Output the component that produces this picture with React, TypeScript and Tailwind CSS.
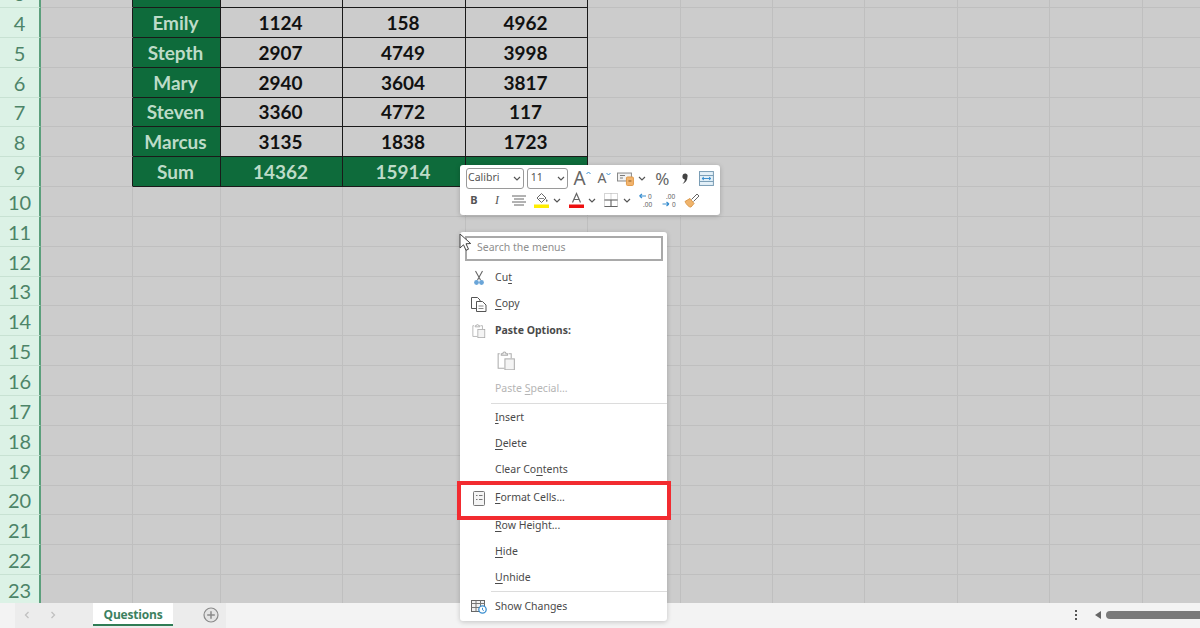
const gridCols = "grid grid-cols-[41px_92px_88px_122px_123px_122px_93px_92px_92px_93px_92px_93px_57px]";

const rows = [
  { n: 3, name: "Joanne", v: ["350", "450", "5023"], h: "h-[8px]" },
  { n: 4, name: "Emily", v: ["1124", "158", "4962"] },
  { n: 5, name: "Stepth", v: ["2907", "4749", "3998"] },
  { n: 6, name: "Mary", v: ["2940", "3604", "3817"] },
  { n: 7, name: "Steven", v: ["3360", "4772", "117"] },
  { n: 8, name: "Marcus", v: ["3135", "1838", "1723"] },
  { n: 9, name: "Sum", v: ["14362", "15914", ""], sum: true },
];
const empty = Array.from({ length: 14 }, (_, i) => i + 10);

function Txt({ children }: { children: React.ReactNode }) {
  return <span className="block h-[30px] shrink-0 pt-px leading-[30px] w-full text-center">{children}</span>;
}

function RowHeader({ n }: { n: number }) {
  return (
    <div className="flex items-end overflow-hidden bg-[#dcf2e6] border-r-2 border-r-[#5c9f7c] border-b border-b-[#c8e2d3] text-[#4d8468] text-[20px]">
      <Txt>{n}</Txt>
    </div>
  );
}

function EmptyCells({ count }: { count: number }) {
  return (
    <>
      {Array.from({ length: count }).map((_, i) => (
        <div key={i} className="border-r border-b border-[#bfbfbf] last:border-r-0" />
      ))}
    </>
  );
}

function Chevron({ className = "" }: { className?: string }) {
  return (
    <svg width="8" height="5" viewBox="0 0 8 5" className={className}>
      <path d="M1 1l3 3 3-3" fill="none" stroke="#555" strokeWidth="1.2" />
    </svg>
  );
}

function MenuItem({ icon, children, muted, bold, className = "" }: { icon?: React.ReactNode; children: React.ReactNode; muted?: boolean; bold?: boolean; className?: string }) {
  return (
    <div className={`flex items-center h-[26px] ${className}`}>
      <div className="w-[35px] flex justify-center items-center pl-[2px] shrink-0">{icon}</div>
      <span className={`text-[10.5px] underline-offset-2 ${muted ? "text-[#b5b5b5]" : "text-[#4a4a4a]"} ${bold ? "font-bold" : ""}`}>{children}</span>
    </div>
  );
}

function Clip({ size = 18, stroke = "#9a9a9a" }: { size?: number; stroke?: string }) {
  return (
    <svg width={size} height={size * 1.1} viewBox="0 0 18 20" fill="none" stroke={stroke} strokeWidth="1">
      <path d="M11 3.500h2.500V8M2.500 3.500H1v14h6" />
      <path d="M4 5V3.500h1.500a1.500 1.500 0 0 1 3 0H10V5z" fill="#f0f0f0" />
      <rect x="7.500" y="8.500" width="9" height="10.500" fill="#f4f4f4" />
    </svg>
  );
}

export default function App() {
  return (
    <div className="relative w-[1200px] h-[628px] overflow-hidden bg-[#cccccc] font-['Lato',sans-serif]">
      {/* Sheet */}
      <div className="h-[603px] overflow-hidden">
        {rows.map((r) => {
          const cell = "flex items-end overflow-hidden border-r border-b border-[#1a1a1a] font-bold text-[19px] pr-[2px]";
          const green = "bg-[#0e6b3b] text-[#bddbc8]";
          return (
            <div key={r.n} className={`${gridCols} ${r.h ?? "h-[29.85px]"}`}>
              <RowHeader n={r.n} />
              <div className="border-r border-b border-[#bfbfbf] !border-r-[#1a1a1a]" />
              <div className={`${cell} ${green}`}><Txt>{r.name}</Txt></div>
              {r.v.map((v, j) => (
                <div key={j} className={`${cell} ${r.sum ? green : "text-[#111111]"}`}><Txt>{v}</Txt></div>
              ))}
              <EmptyCells count={6} />
              <div className="border-b border-[#bfbfbf]" />
            </div>
          );
        })}
        {empty.map((n) => (
          <div key={n} className={`${gridCols} h-[29.85px]`}>
            <RowHeader n={n} />
            <EmptyCells count={12} />
          </div>
        ))}
      </div>

      {/* Sheet tabs bar */}
      <div className="h-[25px] flex bg-[#f3f3f3] relative">
        <div className="w-[226px] bg-[#ececec] flex items-start">
          <div className="w-[15px] h-full bg-[#f3f3f3]" />
          <div className="w-[78px] flex items-center h-[24px] pl-[9px] gap-[20px]">
            <svg width="6" height="8" viewBox="0 0 6 8"><path d="M4.500 1L1.500 4l3 3" fill="none" stroke="#c0c0c0" strokeWidth="1.300" /></svg>
            <svg width="6" height="8" viewBox="0 0 6 8"><path d="M1.500 1l3 3-3 3" fill="none" stroke="#c0c0c0" strokeWidth="1.300" /></svg>
          </div>
          <div className="w-[80px] h-[23px] bg-white border-b-2 border-[#2f7d55] flex items-center justify-center pt-[2px] text-[12px] font-bold text-[#3c8160] font-['Open_Sans',sans-serif] -tracking-[0.2px]">
            Questions
          </div>
          <div className="flex-1 flex justify-end items-center h-[24px] pr-[7px]">
            <svg width="16" height="16" viewBox="0 0 16 16" fill="none" stroke="#8a8a8a" strokeWidth="1.200">
              <circle cx="8" cy="8" r="7" fill="#e4e4e4" />
              <path d="M8 4.200v7.600M4.200 8h7.600" strokeWidth="1.500" />
            </svg>
          </div>
        </div>
        <div className="flex-1 flex items-center justify-end pb-[2px]">
          <div className="flex flex-col gap-[2px] mr-[17px]">
            <span className="w-[2px] h-[2px] bg-[#555]" />
            <span className="w-[2px] h-[2px] bg-[#555]" />
            <span className="w-[2px] h-[2px] bg-[#555]" />
          </div>
          <svg width="8" height="10" viewBox="0 0 8 10" className="mr-[4px]"><path d="M7 1v8L1 5z" fill="#666" /></svg>
          <div className="w-[94px] h-[8px] bg-[#7a7a7a] rounded-l-full" />
        </div>
      </div>

      {/* Mini toolbar */}
      <div className="absolute left-[460px] top-[165px] w-[260px] h-[50px] bg-white rounded-[3px] shadow-[0_1px_5px_rgba(0,0,0,0.22)] font-['Noto_Sans',sans-serif] px-[6px] pt-[2px]">
        <div className="flex items-center h-[22px]">
          <div className="w-[58px] h-[21px] border border-[#9a9a9a] rounded-[3px] flex items-center justify-between pl-[1px] pr-[2px] text-[10.5px] text-[#555]">Calibri<Chevron /></div>
          <div className="w-[42px] h-[21px] ml-[3px] border border-[#9a9a9a] rounded-[3px] flex items-center justify-between pl-[3px] pr-[2px] text-[10.5px] text-[#555]">11<Chevron /></div>
          <div className="ml-[5px] w-[17px] h-[20px] text-[19px] leading-[20px] text-[#666] flex">A<svg width="5" height="4" viewBox="0 0 5 4" className="mt-[3px] shrink-0"><path d="M.5 3l2-2 2 2" fill="none" stroke="#3b8fd0" /></svg></div>
          <div className="ml-[7px] w-[15px] h-[20px] text-[14px] leading-[20px] text-[#666] flex">A<svg width="5" height="4" viewBox="0 0 5 4" className="mt-[4px] shrink-0"><path d="M.5 1l2 2 2-2" fill="none" stroke="#3b8fd0" /></svg></div>
          <svg width="17" height="15" viewBox="0 0 17 15" className="ml-[5px]">
            <rect x=".5" y="2" width="14" height="8" fill="#f2f2f2" stroke="#888" />
            <path d="M3 4.500h5M3 7h3" stroke="#777" />
            <rect x="9.500" y="6" width="7" height="8.500" rx="1" fill="#f2b46e" stroke="#e19a4a" />
            <path d="M11.500 10h3" stroke="#8a5a20" />
          </svg>
          <Chevron className="ml-[4px]" />
          <span className="ml-[9px] w-[20px] text-[17px] leading-none text-[#666]">%</span>
          <svg width="8" height="13" viewBox="0 0 8 13" className="ml-[6px]">
            <path d="M1.500 4a2.600 2.600 0 1 1 5 1c0 3-2 6-5 7 1.500-1.500 2.300-3 2.400-4.500A3 3 0 0 1 1.500 4z" fill="#444" />
          </svg>
          <svg width="15" height="15" viewBox="0 0 15 15" className="ml-[10px]">
            <rect x=".5" y=".5" width="14" height="14" fill="#e3f0f8" stroke="#7a9db5" />
            <path d="M.5 4.500h14M.5 10.500h14" stroke="#7a9db5" />
            <path d="M3 7.500h9M3 7.500l2-1.500M3 7.500l2 1.500M12 7.500l-2-1.500M12 7.500l-2 1.500" stroke="#3b8fd0" fill="none" />
          </svg>
        </div>
        <div className="flex items-center h-[22px]">
          <span className="w-[12px] ml-[2px] text-center text-[11px] font-bold text-[#555]">B</span>
          <span className="w-[12px] ml-[11px] text-center text-[12px] italic text-[#555] font-['Liberation_Serif',serif]">I</span>
          <svg width="14" height="11" viewBox="0 0 14 11" className="ml-[9px]"><path d="M0 1h14M2 4h10M0 7h14M2 10h10" stroke="#666" /></svg>
          <svg width="15" height="16" viewBox="0 0 15 16" className="ml-[8px]">
            <path d="M7.500 1.500l4.500 4.500-4.500 4.500L3 6z" fill="#fff" stroke="#666" />
            <path d="M5 6.500h5" stroke="#888" />
            <path d="M12.500 7c1 1.300 1.500 2 .8 2.600-.6.4-1.400 0-1.300-.8z" fill="#666" />
            <rect x="0" y="12.500" width="15" height="3.500" fill="#ffee00" />
          </svg>
          <Chevron className="ml-[4px]" />
          <svg width="15" height="16" viewBox="0 0 15 16" className="ml-[8px]">
            <path d="M3.500 10.500l4-9 4 9M5 7.500h5" fill="none" stroke="#666" strokeWidth="1.200" />
            <rect x="0" y="12.500" width="15" height="3.500" fill="#ee1111" />
          </svg>
          <Chevron className="ml-[4px]" />
          <svg width="14" height="14" viewBox="0 0 14 14" className="ml-[8px]">
            <path d="M.5.5h13v13H.5zM7 .5v13M.5 7h13" fill="none" stroke="#aaa" strokeDasharray="1 1" />
            <path d="M.5 13.500h13M7 7v6.500M.5 7h13" fill="none" stroke="#666" />
          </svg>
          <Chevron className="ml-[5px]" />
          <svg width="16" height="15" viewBox="0 0 16 15" className="ml-[7px]">
            <path d="M8 3H1.500M1.500 3l2.500-2M1.500 3l2.500 2" fill="none" stroke="#3b8fd0" strokeWidth="1.200" />
            <text x="10" y="6" fontSize="6.500" fill="#666">0</text>
            <text x="5" y="13.500" fontSize="6.500" fill="#666">.00</text>
          </svg>
          <svg width="16" height="15" viewBox="0 0 16 15" className="ml-[8px]">
            <text x="4" y="6" fontSize="6.500" fill="#666">.00</text>
            <path d="M.5 11H7M7 11L4.500 9M7 11l-2.500 2" fill="none" stroke="#3b8fd0" strokeWidth="1.200" />
            <text x="10" y="13.500" fontSize="6.500" fill="#666">0</text>
          </svg>
          <svg width="16" height="15" viewBox="0 0 16 15" className="ml-[6px]">
            <path d="M1 8.500l5-3 4 5-3 3.500c-2 .5-5-3-6-5.500z" fill="#f0b46c" stroke="#dc9a4c" />
            <path d="M7.500 6.500L13 1l2 2-5.500 5.500" fill="#fff" stroke="#666" />
          </svg>
        </div>
      </div>

      {/* Context menu */}
      <div className="absolute left-[460px] top-[232px] w-[207px] h-[389px] bg-white rounded-[3px] shadow-[0_1px_5px_rgba(0,0,0,0.2)] font-['Noto_Sans',sans-serif]">
        <div className="mx-[5px] mt-[4px] h-[25px] w-[198px] border-2 border-[#a9a9a9] flex items-center pl-[10px] pb-[2px] text-[10.5px] text-[#8f8f8f]">Search the menus</div>
        <div className="h-[4px]" />
        <MenuItem icon={
          <svg width="12" height="16" viewBox="0 0 12 16" fill="none">
            <path d="M2.500 1L7.500 10M9.500 1L4.500 10" stroke="#666" strokeWidth="1.100" />
            <circle cx="3.500" cy="12.500" r="2.400" fill="#6aa5d8" />
            <circle cx="8.500" cy="12.500" r="2.400" fill="#6aa5d8" />
          </svg>
        }>Cu<u>t</u></MenuItem>
        <MenuItem icon={
          <svg width="16" height="15" viewBox="0 0 16 15" fill="none" stroke="#555">
            <path d="M5.500 11.500H.5V.5h6L9 3v1" />
            <path d="M5.500 4.500h6l3.500 3.500v6.500H5.500z" fill="#fff" />
            <path d="M7.500 9h5M7.500 11.500h5" stroke="#888" />
          </svg>
        }><u>C</u>opy</MenuItem>
        <MenuItem bold className="mt-px" icon={<Clip size={14} stroke="#a8a8a8" />}>Paste Options:</MenuItem>
        <div className="h-[32px] pl-[37px] flex items-center">
          <Clip size={19} stroke="#adadad" />
        </div>
        <MenuItem muted>Paste <u>S</u>pecial...</MenuItem>
        <div className="ml-[31px] h-px bg-[#dcdcdc] mt-px mb-[1px]" />
        <MenuItem><u>I</u>nsert</MenuItem>
        <MenuItem><u>D</u>elete</MenuItem>
        <MenuItem>Clear Co<u>n</u>tents</MenuItem>
        <MenuItem className="mt-[2px] mb-[2px]" icon={
          <svg width="12" height="15" viewBox="0 0 12 15" fill="none">
            <rect x=".5" y=".5" width="11" height="14" rx="1" fill="#f4f4f4" stroke="#777" />
            <path d="M3 4.500h1.500M3 8.500h1.500M6 4.500h3.500M6 8.500h3.500" stroke="#777" />
          </svg>
        }><u>F</u>ormat Cells...</MenuItem>
        <MenuItem><u>R</u>ow Height...</MenuItem>
        <MenuItem><u>H</u>ide</MenuItem>
        <MenuItem><u>U</u>nhide</MenuItem>
        <div className="ml-[31px] h-px bg-[#dcdcdc] mb-[2px]" />
        <MenuItem icon={
          <svg width="16" height="14" viewBox="0 0 16 14" fill="none">
            <rect x=".5" y=".5" width="13" height="11" fill="#f2f2f2" stroke="#666" />
            <path d="M.5 3.500h13M.5 7.500h13M5 .5v11M9.500 .5v11" stroke="#777" />
            <circle cx="11.500" cy="9.500" r="3.700" fill="#fff" stroke="#3b8fd0" strokeWidth="1.300" />
            <path d="M11.500 7.800v2l1.300.8" stroke="#3b8fd0" />
          </svg>
        }>Show Changes</MenuItem>
      </div>

      {/* Red highlight */}
      <div className="absolute left-[457px] top-[481px] w-[214px] h-[39px] border-[4px] border-[#f22b30]" />

      {/* Cursor */}
      <svg className="absolute left-[459px] top-[233px]" width="14" height="19" viewBox="0 0 14 19">
        <path d="M1 1v14l3.500-3.200 2.500 5.500 2.500-1.100-2.500-5.400 4.700-.3z" fill="#fff" stroke="#444" strokeWidth="1" />
      </svg>
    </div>
  );
}
